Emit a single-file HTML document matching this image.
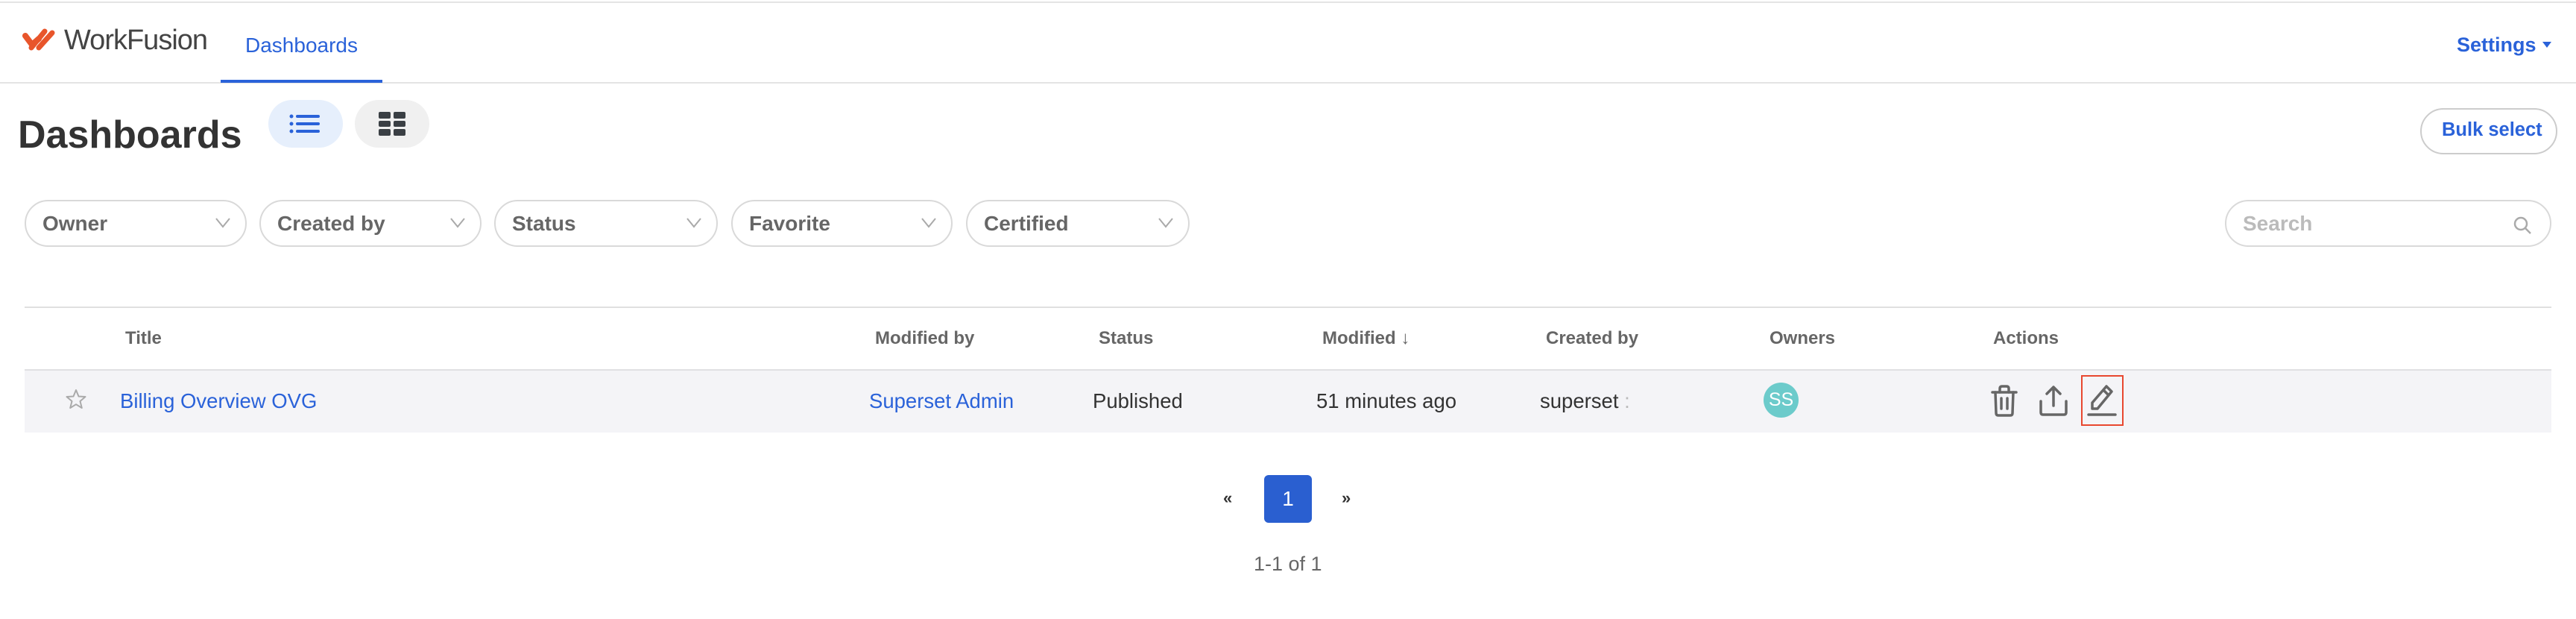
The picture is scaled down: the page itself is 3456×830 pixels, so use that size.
<!DOCTYPE html>
<html><head><meta charset="utf-8"><style>
*{margin:0;padding:0;box-sizing:border-box}
body{width:3456px;height:830px;background:#fff;position:relative;overflow:hidden;font-family:"Liberation Sans",Arial,sans-serif}
.a{position:absolute}
.filt{position:absolute;top:268px;height:63px;border:2px solid #d9d9d9;border-radius:32px;background:#fff}
.filt span{position:absolute;left:22px;top:14px;font-size:28px;font-weight:bold;color:#666}
.filt svg{position:absolute;right:20px;top:22px}
.th{position:absolute;top:440px;font-size:24px;font-weight:bold;color:#666}
.td{position:absolute;top:522px;font-size:27.5px;color:#333}
</style></head><body>
<div class="a" style="left:0;top:2px;width:3456px;height:2px;background:#e4e4e4"></div>
<svg class="a" style="left:30px;top:36px" width="48" height="34" viewBox="0 0 48 34"><path d="M4 12 L13 24 L22 16" stroke="#e8552b" stroke-width="8" fill="none" stroke-linecap="round" stroke-linejoin="round"/><path d="M12 28 L30 6 M22 28 L40 8" stroke="#e8552b" stroke-width="7" fill="none" stroke-linecap="round"/></svg>
<div class="a" style="left:86px;top:33px;font-size:38px;color:#444;letter-spacing:-1px">WorkFusion</div>
<div class="a" style="left:329px;top:45px;font-size:28px;color:#2a62d9">Dashboards</div>
<div class="a" style="left:0;top:110px;width:3456px;height:2px;background:#e4e4e4"></div>
<div class="a" style="left:296px;top:107px;width:217px;height:4px;background:#2a62d9"></div>
<div class="a" style="left:3296px;top:45px;font-size:27px;font-weight:bold;color:#2a62d9">Settings</div>
<svg class="a" style="left:3411px;top:56px" width="12" height="8"><path d="M0 0H12L6 8Z" fill="#2a62d9"/></svg>
<div class="a" style="left:24px;top:151px;font-size:52px;font-weight:bold;color:#333">Dashboards</div>
<div class="a" style="left:360px;top:134px;width:100px;height:64px;border-radius:32px;background:#e6effc"></div>
<svg class="a" style="left:388px;top:152px" width="44" height="28"><g fill="#2a62d9"><circle cx="3" cy="4" r="2.5"/><circle cx="3" cy="14" r="2.5"/><circle cx="3" cy="24" r="2.5"/><rect x="9" y="2" width="32" height="4" rx="2"/><rect x="9" y="12" width="32" height="4" rx="2"/><rect x="9" y="22" width="32" height="4" rx="2"/></g></svg>
<div class="a" style="left:476px;top:134px;width:100px;height:64px;border-radius:32px;background:#f0f0f0"></div>
<svg class="a" style="left:508px;top:150px" width="37" height="33"><g fill="#3a3f44"><rect x="0" y="0" width="16" height="9" rx="2"/><rect x="20" y="0" width="16" height="9" rx="2"/><rect x="0" y="12" width="16" height="8" rx="2"/><rect x="20" y="12" width="16" height="8" rx="2"/><rect x="0" y="23" width="16" height="9" rx="2"/><rect x="20" y="23" width="16" height="9" rx="2"/></g></svg>
<div class="a" style="left:3247px;top:145px;width:184px;height:62px;border:2px solid #ccc;border-radius:31px"></div>
<div class="a" style="left:3276px;top:160px;font-size:25.5px;font-weight:bold;color:#2a62d9">Bulk select</div>
<div class="filt" style="left:33px;width:298px"><span>Owner</span><svg width="20" height="14"><path d="M1 1L10 12L19 1" stroke="#aaa" stroke-width="2" fill="none"/></svg></div>
<div class="filt" style="left:348px;width:298px"><span>Created by</span><svg width="20" height="14"><path d="M1 1L10 12L19 1" stroke="#aaa" stroke-width="2" fill="none"/></svg></div>
<div class="filt" style="left:663px;width:300px"><span>Status</span><svg width="20" height="14"><path d="M1 1L10 12L19 1" stroke="#aaa" stroke-width="2" fill="none"/></svg></div>
<div class="filt" style="left:981px;width:297px"><span>Favorite</span><svg width="20" height="14"><path d="M1 1L10 12L19 1" stroke="#aaa" stroke-width="2" fill="none"/></svg></div>
<div class="filt" style="left:1296px;width:300px"><span>Certified</span><svg width="20" height="14"><path d="M1 1L10 12L19 1" stroke="#aaa" stroke-width="2" fill="none"/></svg></div>
<div class="filt" style="left:2985px;width:438px"><span style="color:#bbb">Search</span></div>
<svg class="a" style="left:3372px;top:290px" width="26" height="26"><circle cx="10" cy="10" r="8" stroke="#aaa" stroke-width="2.5" fill="none"/><path d="M16 16L23 23" stroke="#aaa" stroke-width="2.5"/></svg>
<div class="a" style="left:33px;top:411px;width:3390px;height:2px;background:#e0e0e0"></div>
<div class="th" style="left:168px">Title</div>
<div class="th" style="left:1174px">Modified by</div>
<div class="th" style="left:1474px">Status</div>
<div class="th" style="left:1774px">Modified &#8595;</div>
<div class="th" style="left:2074px">Created by</div>
<div class="th" style="left:2374px">Owners</div>
<div class="th" style="left:2674px">Actions</div>
<div class="a" style="left:33px;top:495px;width:3390px;height:85px;background:#f4f4f7;border-top:2px solid #e0e0e3"></div>
<svg class="a" style="left:88px;top:521px" width="28" height="28"><path d="M14 2L17.5 10.5L26.5 11L19.5 17L21.8 26L14 21.2L6.2 26L8.5 17L1.5 11L10.5 10.5Z" stroke="#aaa" stroke-width="2" fill="none" stroke-linejoin="round"/></svg>
<div class="td" style="left:161px;color:#2a62d9">Billing Overview OVG</div>
<div class="td" style="left:1166px;color:#2a62d9">Superset Admin</div>
<div class="td" style="left:1466px">Published</div>
<div class="td" style="left:1766px">51 minutes ago</div>
<div class="td" style="left:2066px">superset <span style="color:#bbb">:</span></div>
<div class="a" style="left:2366px;top:513px;width:47px;height:47px;border-radius:50%;background:#6ccbcb;color:#fff;font-size:25px;text-align:center;line-height:47px">SS</div>
<svg class="a" style="left:2671px;top:516px" width="36" height="44"><g stroke="#666" stroke-width="3.5" fill="none" stroke-linecap="round"><path d="M2 10H34"/><path d="M12 10V5Q12 2 15 2H21Q24 2 24 5V10"/><path d="M6 10L7 38Q7 41 10 41H26Q29 41 29 38L30 10"/><path d="M14 18V32M22 18V32"/></g></svg>
<svg class="a" style="left:2735px;top:516px" width="40" height="44"><g stroke="#666" stroke-width="3.5" fill="none" stroke-linecap="round" stroke-linejoin="round"><path d="M20 3V28M11 12L20 3L29 12"/><path d="M3 22V37Q3 40 6 40H34Q37 40 37 37V22"/></g></svg>
<div class="a" style="left:2792px;top:503px;width:57px;height:68px;border:2px solid #e8472f"></div>
<svg class="a" style="left:2798px;top:510px" width="44" height="52"><g stroke="#666" stroke-width="3.5" fill="none" stroke-linejoin="round"><path d="M9 38V30L28 8L35 15L16 38Z"/><path d="M24 13L31 20"/><path d="M4 46H40" stroke-linecap="round"/></g></svg>
<div class="a" style="left:1641px;top:655px;font-size:22px;font-weight:bold;color:#333">&#171;</div>
<div class="a" style="left:1696px;top:637px;width:64px;height:64px;border-radius:6px;background:#2a5fd0;color:#fff;font-size:28px;text-align:center;line-height:64px">1</div>
<div class="a" style="left:1800px;top:655px;font-size:22px;font-weight:bold;color:#333">&#187;</div>
<div class="a" style="left:1682px;top:741px;font-size:27px;color:#666">1-1 of 1</div>
</body></html>
